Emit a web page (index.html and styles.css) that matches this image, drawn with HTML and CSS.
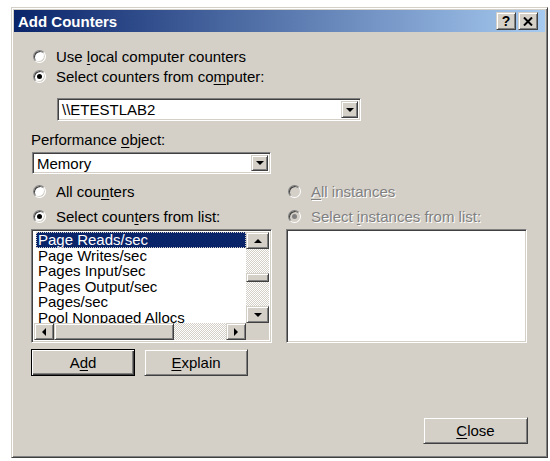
FILE: index.html
```html
<!DOCTYPE html>
<html lang="en">
<head>
  <meta charset="UTF-8">
  <title>Add Counters</title>
  <link rel="stylesheet" href="styles.css">
</head>
<body>
  <div class="window">
    <div class="titlebar">
      <span class="title">Add Counters</span>
      <div class="cap-btns">
        <span class="cap-btn raised">?</span>
        <span class="cap-btn raised">
          <svg width="10" height="9" viewBox="0 0 10 9"><path d="M1 0.5 L9 8.5 M9 0.5 L1 8.5" stroke="#000" stroke-width="2"/></svg>
        </span>
      </div>
    </div>

    <div class="content">
      <div class="radio-row"><span class="radio"></span><span>Use <u>l</u>ocal computer counters</span></div>
      <div class="radio-row"><span class="radio checked"></span><span>Select counters from co<u>m</u>puter:</span></div>

      <div class="combo sunken computer">
        <span class="combo-text">\\ETESTLAB2</span>
        <span class="drop-btn raised"><i class="arr arr-down"></i></span>
      </div>

      <div class="field-label">Performance <u>o</u>bject:</div>
      <div class="combo sunken object">
        <span class="combo-text">Memory</span>
        <span class="drop-btn raised"><i class="arr arr-down"></i></span>
      </div>

      <div class="columns">
        <div class="col">
          <div class="radio-row tall"><span class="radio"></span><span>All cou<u>n</u>ters</span></div>
          <div class="radio-row tall"><span class="radio checked"></span><span>Select coun<u>t</u>ers from list:</span></div>
          <div class="listbox sunken">
            <div class="items">
              <div class="item selected">Page Reads/sec</div>
              <div class="item">Page Writes/sec</div>
              <div class="item">Pages Input/sec</div>
              <div class="item">Pages Output/sec</div>
              <div class="item">Pages/sec</div>
              <div class="item">Pool Nonpaged Allocs</div>
            </div>
            <div class="vscroll">
              <span class="sb-btn raised"><i class="arr arr-up"></i></span>
              <div class="track"><span class="thumb-v raised"></span></div>
              <span class="sb-btn raised"><i class="arr arr-down"></i></span>
            </div>
            <div class="hscroll">
              <span class="sb-btn raised"><i class="arr arr-left"></i></span>
              <div class="track"><span class="thumb-h raised"></span></div>
              <span class="sb-btn raised"><i class="arr arr-right"></i></span>
            </div>
            <div class="corner"></div>
          </div>
          <div class="button-row">
            <button class="btn default">A<u>d</u>d</button>
            <button class="btn raised"><u>E</u>xplain</button>
          </div>
        </div>

        <div class="col disabled">
          <div class="radio-row tall"><span class="radio"></span><span><u>A</u>ll instances</span></div>
          <div class="radio-row tall"><span class="radio checked"></span><span>Select <u>i</u>nstances from list:</span></div>
          <div class="listbox sunken empty"></div>
        </div>
      </div>

      <div class="footer">
        <button class="btn raised"><u>C</u>lose</button>
      </div>
    </div>
  </div>
</body>
</html>
```

FILE: styles.css
```css
body {
  margin: 0;
  background: #ffffff;
  font-family: "Liberation Sans", Arial, sans-serif;
  font-size: 15px;
  color: #000;
}

u {
  text-decoration: underline;
  text-underline-offset: 2px;
}

/* classic 3d edges */
.raised {
  box-sizing: border-box;
  background: #d4d0c8;
  border: 1px solid;
  border-color: #d4d0c8 #404040 #404040 #d4d0c8;
  box-shadow: inset 1px 1px #ffffff, inset -1px -1px #808080;
}

.sunken {
  box-sizing: border-box;
  background: #ffffff;
  border: 1px solid;
  border-color: #808080 #ffffff #ffffff #808080;
  box-shadow: inset 1px 1px #404040, inset -1px -1px #d4d0c8;
}

.window {
  margin: 7px 0 0 11px;
  width: 537px;
  height: 451px;
  box-sizing: border-box;
  background: #d4d0c8;
  border: 1px solid;
  border-color: #d4d0c8 #404040 #404040 #d4d0c8;
  box-shadow: inset 1px 1px #ffffff, inset -1px -1px #808080;
  padding: 2px;
  display: flex;
  flex-direction: column;
}

.titlebar {
  height: 22px;
  flex-shrink: 0;
  background: linear-gradient(to right, #0a246a, #a6caf0);
  display: flex;
  align-items: center;
  justify-content: space-between;
  padding: 0 7px 0 4px;
}

.title {
  color: #ffffff;
  font-weight: bold;
  font-size: 15px;
}

.cap-btns {
  display: flex;
  gap: 2px;
}

.cap-btn {
  width: 20px;
  height: 18px;
  display: flex;
  align-items: center;
  justify-content: center;
  font-weight: bold;
  font-size: 14px;
}

.content {
  flex: 1;
  padding: 14px 18px 11px 17px;
  display: flex;
  flex-direction: column;
}

.radio-row {
  display: flex;
  align-items: center;
  height: 20px;
  white-space: nowrap;
}

.radio-row.tall {
  height: 25px;
}

.radio {
  width: 13px;
  height: 13px;
  flex-shrink: 0;
  box-sizing: border-box;
  border-radius: 50%;
  background: #ffffff;
  border: 1px solid;
  border-color: #808080 #ffffff #ffffff #808080;
  box-shadow: inset 1px 1px #404040, inset -1px -1px #d4d0c8;
  margin: 0 10px 0 2px;
  display: flex;
  align-items: center;
  justify-content: center;
}

.radio.checked::after {
  content: "";
  width: 5px;
  height: 5px;
  border-radius: 50%;
  background: #000;
}

.combo {
  display: flex;
  align-items: stretch;
  padding: 2px;
}

.combo.computer {
  margin: 12px 0 0 26px;
  width: 304px;
  height: 23px;
}

.combo.object {
  margin: 3px 0 0 1px;
  width: 239px;
  height: 22px;
}

.combo-text {
  flex: 1;
  padding-left: 2px;
  align-self: center;
}

.drop-btn {
  width: 17px;
  display: flex;
  align-items: center;
  justify-content: center;
}

.arr {
  width: 0;
  height: 0;
  border: 4px solid transparent;
}

.arr-down { border-top: 4px solid #000; border-bottom-width: 0; }
.arr-up { border-bottom: 4px solid #000; border-top-width: 0; }
.arr-left { border-right: 4px solid #000; border-left-width: 0; }
.arr-right { border-left: 4px solid #000; border-right-width: 0; }

.field-label {
  margin-top: 10px;
  height: 18px;
  line-height: 18px;
}

.columns {
  margin-top: 5px;
  display: grid;
  grid-template-columns: 241px 241px;
  column-gap: 14px;
}

.listbox {
  width: 241px;
  height: 114px;
  padding: 2px;
  display: grid;
  grid-template-columns: 1fr 23px;
  grid-template-rows: 1fr 17px;
}

.items {
  overflow: hidden;
  padding-left: 2px;
}

.item {
  height: 15.5px;
  line-height: 15.5px;
  padding-left: 2px;
  white-space: nowrap;
}

.item.selected {
  background: #0a246a;
  color: #ffffff;
  outline: 1px dotted #d4d0c8;
  outline-offset: -1px;
}

.vscroll {
  display: flex;
  flex-direction: column;
}

.hscroll {
  display: flex;
}

.sb-btn {
  flex-shrink: 0;
  display: flex;
  align-items: center;
  justify-content: center;
}

.vscroll .sb-btn {
  height: 17px;
}

.hscroll .sb-btn {
  width: 20px;
}

.track {
  flex: 1;
  display: flex;
  background: repeating-conic-gradient(#ffffff 0 25%, #d4d0c8 0 50%) 0 0 / 2px 2px;
}

.vscroll .track {
  flex-direction: column;
}

.thumb-v {
  margin-top: 24px;
  height: 9px;
}

.thumb-h {
  width: 120px;
}

.corner {
  background: #d4d0c8;
}

.button-row {
  margin-top: 6px;
  display: flex;
  gap: 9px;
}

.btn {
  width: 104px;
  height: 27px;
  font-family: inherit;
  font-size: 15px;
  color: #000;
  padding: 0;
  cursor: pointer;
}

.btn.default {
  box-sizing: border-box;
  background: #d4d0c8;
  border: 1px solid #000;
  box-shadow: inset 1px 1px #ffffff, inset -1px -1px #404040, inset -2px -2px #808080;
}

.disabled {
  color: #808080;
  text-shadow: 1px 1px #ffffff;
}

.disabled .radio {
  background: #d4d0c8;
}

.disabled .radio.checked::after {
  background: #808080;
}

.footer {
  margin-top: auto;
  display: flex;
  justify-content: flex-end;
}

.footer .btn {
  width: 105px;
  margin-right: -1px;
}
```
